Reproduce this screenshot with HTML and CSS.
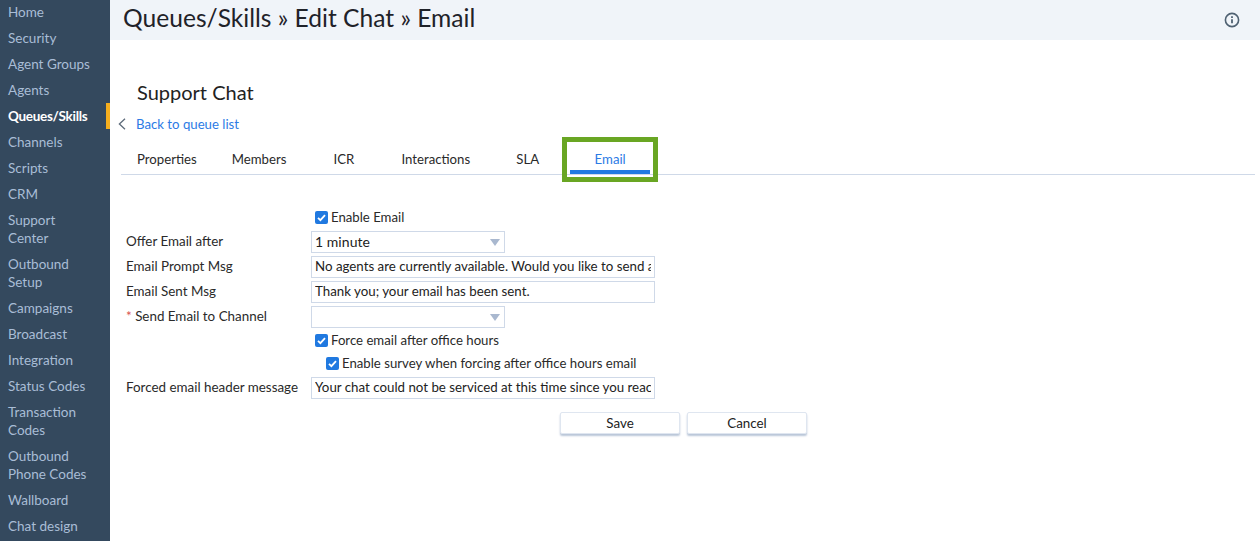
FILE: index.html
```html
<!DOCTYPE html>
<html lang="en">
<head>
<meta charset="utf-8">
<title>Queues/Skills » Edit Chat » Email</title>
<link rel="stylesheet" href="styles.css">
</head>
<body>
<div class="app">
  <nav class="sidebar">
    <a class="nav-item">Home</a>
    <a class="nav-item">Security</a>
    <a class="nav-item">Agent Groups</a>
    <a class="nav-item">Agents</a>
    <a class="nav-item active">Queues/Skills</a>
    <a class="nav-item">Channels</a>
    <a class="nav-item">Scripts</a>
    <a class="nav-item">CRM</a>
    <a class="nav-item">Support Center</a>
    <a class="nav-item">Outbound Setup</a>
    <a class="nav-item">Campaigns</a>
    <a class="nav-item">Broadcast</a>
    <a class="nav-item">Integration</a>
    <a class="nav-item">Status Codes</a>
    <a class="nav-item">Transaction Codes</a>
    <a class="nav-item">Outbound Phone Codes</a>
    <a class="nav-item">Wallboard</a>
    <a class="nav-item">Chat design</a>
  </nav>
  <main class="main">
    <header class="topbar">
      <h1 class="page-title">Queues/Skills » Edit Chat » Email</h1>
      <svg class="info-icon" width="16" height="16" viewBox="0 0 16 16" fill="none" stroke="#4f6172"><circle cx="8" cy="8" r="6.6" stroke-width="1.6"/><path d="M8 7.2v4" stroke-width="1.8"/><path d="M8 4.2v1.8" stroke-width="1.8"/></svg>
    </header>
    <section class="content">
      <h2 class="queue-name">Support Chat</h2>
      <div class="back-row">
        <svg class="chevron" width="8" height="12" viewBox="0 0 8 12" fill="none" stroke="#5d6b7a" stroke-width="1.3"><path d="M7 .8 1.4 6 7 11.2"/></svg>
        <a class="back-link">Back to queue list</a>
      </div>
      <div class="tabs">
        <span class="tab">Properties</span>
        <span class="tab">Members</span>
        <span class="tab">ICR</span>
        <span class="tab">Interactions</span>
        <span class="tab">SLA</span>
        <span class="tab selected">Email<i class="highlight"></i></span>
      </div>
      <form class="form">
        <div class="row row-check"><span class="label"></span><label class="check"><span class="box"><svg width="13" height="13" viewBox="0 0 13 13" fill="none" stroke="#fff" stroke-width="1.8"><path d="M3 6.8 5.4 9.2 10 4.2"/></svg></span>Enable Email</label></div>
        <div class="row"><span class="label">Offer Email after</span><div class="select">1 minute</div></div>
        <div class="row"><span class="label">Email Prompt Msg</span><input class="input" type="text" value="No agents are currently available. Would you like to send an email?"></div>
        <div class="row"><span class="label">Email Sent Msg</span><input class="input" type="text" value="Thank you; your email has been sent."></div>
        <div class="row"><span class="label"><span class="req">*</span> Send Email to Channel</span><div class="select"></div></div>
        <div class="row row-check second"><span class="label"></span><label class="check"><span class="box"><svg width="13" height="13" viewBox="0 0 13 13" fill="none" stroke="#fff" stroke-width="1.8"><path d="M3 6.8 5.4 9.2 10 4.2"/></svg></span>Force email after office hours</label></div>
        <div class="row row-check third"><span class="label"></span><label class="check nested"><span class="box"><svg width="13" height="13" viewBox="0 0 13 13" fill="none" stroke="#fff" stroke-width="1.8"><path d="M3 6.8 5.4 9.2 10 4.2"/></svg></span>Enable survey when forcing after office hours email</label></div>
        <div class="row"><span class="label">Forced email header message</span><input class="input" type="text" value="Your chat could not be serviced at this time since you reached us after hours."></div>
        <div class="actions">
          <button class="btn" type="button">Save</button>
          <button class="btn" type="button">Cancel</button>
        </div>
      </form>
    </section>
  </main>
</div>
</body>
</html>
```
FILE: styles.css
```css
* { box-sizing: border-box; }
html, body { margin: 0; height: 100%; overflow: hidden; }
body { font-family: Lato, "Noto Sans", sans-serif; font-size: 14px; color: #2a2a2a; background: #fff; }
.app { display: flex; height: 541px; overflow: hidden; }

.sidebar { width: 110px; flex: none; background: #34495e; margin-top: -1px; height: 542px; }
.nav-item { display: block; padding: 4px 14px 4px 8px; font-size: 13.5px; line-height: 18px; color: #a9bdd6; position: relative; }
.nav-item.active { color: #fff; font-weight: 700; letter-spacing: -.3px; }
.nav-item.active::after { content: ""; position: absolute; right: 0; top: 0; bottom: 0; width: 4px; background: #f5ae1e; }

.main { flex: 1; min-width: 0; }
.topbar { height: 40px; background: #f0f4f9; display: flex; align-items: center; justify-content: space-between; padding: 0 20px 0 13px; }
.page-title { margin: 0; font-size: 24.6px; font-weight: 400; line-height: 36px; padding-bottom: 4px; color: #1f2229; }
.info-icon { display: block; }

.content { padding: 39px 5px 0 11px; }
.queue-name { margin: 0 0 0 16px; font-size: 20px; font-weight: 400; line-height: 26px; color: #222; }
.back-row { display: flex; align-items: center; height: 24px; margin-top: 7px; }
.chevron { margin-left: -3px; margin-right: 9px; }
.back-link { color: #2c7be5; font-size: 13.2px; margin-left: 1px; }

.tabs { display: flex; height: 29px; margin-top: 10px; border-bottom: 1px solid #cfd9e8; }
.tab { position: relative; min-width: 80px; padding: 1px 17.5px 0; text-align: center; line-height: 24px; font-size: 13.2px; }
.tab:first-child { margin-left: -1.5px; }
.tab.selected { color: #2c7be5; border-bottom: 4px solid #2079e0; height: 28px; margin-left: 2.5px; }
.highlight { position: absolute; left: -8px; right: -8px; top: -9px; bottom: -12px; border: 5px solid #69a623; }

.form { padding-top: 31px; }
.row { display: flex; align-items: center; height: 22px; margin-bottom: 3px; padding-left: 5px; }
.row.second { height: 18px; margin-bottom: 0; }
.row.third { height: 28px; margin-bottom: 0; }
.label { width: 185px; flex: none; font-size: 13.4px; color: #2a2a2a; padding-bottom: 3px; }
.req { color: #d9534f; }
.check { display: flex; align-items: center; font-size: 13.2px; margin-left: 4px; }
.check.nested { margin-left: 15px; }
.box { width: 13px; height: 13px; border-radius: 2px; background: #2079e0; margin-right: 3px; display: block; }
.box svg { display: block; }

.select { position: relative; width: 194px; height: 22px; border: 1px solid #cfd9e8; padding: 0 3px; line-height: 20px; font-size: 14px; color: #222; letter-spacing: .05px; }
.select::after { content: ""; position: absolute; right: 4px; top: 7px; border-left: 5px solid transparent; border-right: 5px solid transparent; border-top: 7px solid #a9b8cf; }
.input { width: 344px; height: 22px; border: 1px solid #cfd9e8; padding: 0 3px 2px; font: inherit; font-size: 13.3px; color: #222; outline: none; }

.actions { display: flex; gap: 7px; margin-top: 13px; padding-left: 439px; }
.btn { width: 120px; height: 22px; border: 1px solid #dfe6f0; border-radius: 2px; background: #fff; font: inherit; font-size: 13.4px; color: #222; box-shadow: 0 2px 2px #b9c6d8; padding: 0; }
```
